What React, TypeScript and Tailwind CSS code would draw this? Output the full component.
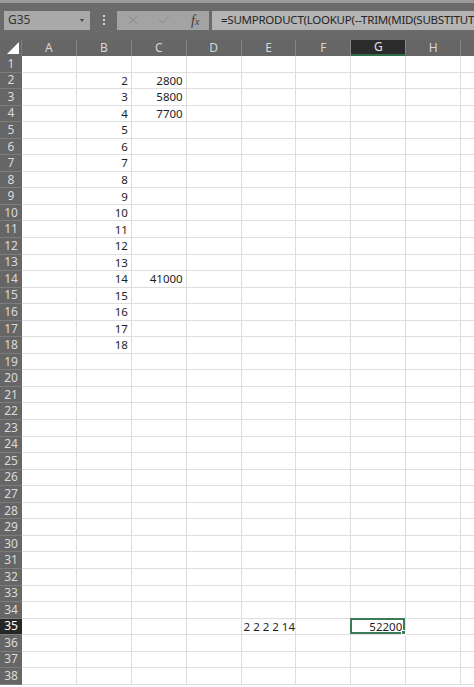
import { Check, X } from "lucide-react";

const cols = ["A", "B", "C", "D", "E", "F", "G", "H", "I"];

const data: Record<string, { v: string; left?: boolean }> = {
  C2: { v: "2800" },
  C3: { v: "5800" },
  C4: { v: "7700" },
  C14: { v: "41000" },
  E35: { v: "2 2 2 2 14", left: true },
  G35: { v: "52200" },
};
for (let r = 2; r <= 18; r++) data[`B${r}`] = { v: String(r) };

const rows = Array.from({ length: 38 }, (_, i) => i + 1);

function Cell({ id }: { id: string }) {
  const cell = data[id];
  const selected = id === "G35";
  return (
    <div className="relative h-full w-[54.9px] shrink-0 border-b border-r border-[#dedede]">
      {cell && (
        <div
          className={`absolute inset-0 flex items-center whitespace-nowrap text-[11.5px] text-[#1e1e1e] ${
            cell.left ? "justify-start pl-[2px]" : "justify-end pr-[3px]"
          }`}
        >
          {cell.v}
        </div>
      )}
      {selected && (
        <div className="absolute -left-[1px] -top-[1px] bottom-0 right-0 border-2 border-[#3f7a56]">
          <div className="absolute -bottom-[3px] -right-[3px] h-[5px] w-[5px] border border-white bg-[#3f7a56]" />
        </div>
      )}
    </div>
  );
}

export default function App() {
  return (
    <div
      className="h-[687px] w-[474px] overflow-hidden bg-white"
      style={{ fontFamily: '"Noto Sans", "Open Sans", sans-serif' }}
    >
      {/* toolbar */}
      <div className="h-[3px] bg-[#9a9a9a]" />
      <div className="flex h-[37px] items-center bg-[#6a6a6a] pb-[6px] pt-[3px]">
        <div className="ml-[4px] flex h-[19px] w-[86px] items-center justify-between bg-[#a9a9a9] pl-[4px] pr-[6px] text-[12px] text-[#353535]">
          <span>G35</span>
          <span className="h-0 w-0 border-x-[2.5px] border-t-[3px] border-x-transparent border-t-[#444]" />
        </div>
        <div className="flex w-[27px] flex-col items-center gap-[2px]">
          <span className="h-[2px] w-[2px] bg-[#d8d8d8]" />
          <span className="h-[2px] w-[2px] bg-[#d8d8d8]" />
          <span className="h-[2px] w-[2px] bg-[#d8d8d8]" />
        </div>
        <div className="flex h-[19px] w-[92px] items-center bg-[#a3a3a3] pl-[9px]">
          <X className="h-[14px] w-[14px] text-[#858585]" strokeWidth={1.5} />
          <Check className="ml-[17px] h-[14px] w-[14px] text-[#858585]" strokeWidth={1.5} />
          <span
            className="ml-[20px] text-[14px] italic text-[#3c3c3c]"
            style={{ fontFamily: '"Liberation Serif", serif' }}
          >
            f<span className="text-[10px]">x</span>
          </span>
        </div>
        <div className="ml-[3px] flex h-[19px] min-w-0 flex-1 items-center overflow-hidden whitespace-nowrap bg-[#b4b4b4] pl-[9px] text-[11.5px] tracking-[-0.25px] text-[#262626]">
          =SUMPRODUCT(LOOKUP(--TRIM(MID(SUBSTITUT
        </div>
      </div>

      {/* column headers */}
      <div className="flex h-[16px] bg-[#666666]">
        <div className="relative w-[22px] shrink-0 border-r border-[#7e7e7e]">
          <div className="absolute bottom-[2px] right-[2px] h-0 w-0 border-b-[12px] border-l-[12px] border-b-white border-l-transparent" />
        </div>
        {cols.map((c) => (
          <div
            key={c}
            className={`flex w-[54.9px] shrink-0 items-center justify-center border-r border-[#868686] text-[12px] ${
              c === "G"
                ? "border-b-2 border-b-[#2f6b46] bg-[#2b2b2b] text-[#e4e4e4]"
                : "text-[#d6d6d6]"
            }`}
          >
            {c === "I" ? "" : c}
          </div>
        ))}
      </div>

      {/* rows */}
      {rows.map((r) => (
        <div key={r} className="flex h-[16.55px]">
          <div
            className={`flex w-[22px] shrink-0 items-center justify-center border-b border-[#7c7c7c] text-[12px] ${
              r === 35 ? "bg-[#262626] text-white" : "bg-[#666666] text-[#dadada]"
            }`}
          >
            {r}
          </div>
          {cols.map((c) => (
            <Cell key={c} id={`${c}${r}`} />
          ))}
        </div>
      ))}
    </div>
  );
}
